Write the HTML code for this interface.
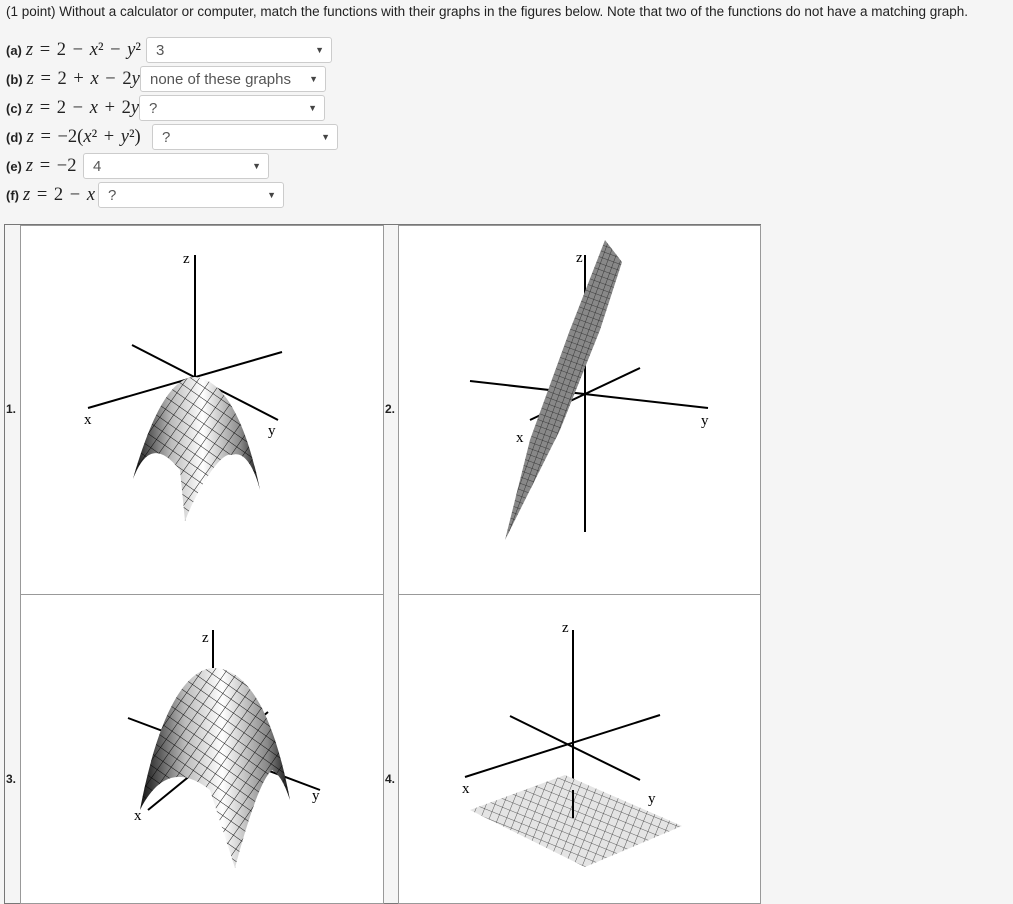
<!DOCTYPE html>
<html><head><meta charset="utf-8"><style>
body{margin:0;background:#f5f5f5;font-family:"Liberation Sans",sans-serif;font-size:14px;color:#222;width:1013px;height:895px;overflow:hidden;position:relative}
.p{position:absolute;left:6px;top:4px;font-size:13.5px}
.row{position:absolute;left:6px;height:28px;display:flex;align-items:center}
.row b{font-weight:bold;font-size:13px;margin-right:4px}
.m{font-family:"Liberation Serif",serif;font-size:18.5px;word-spacing:2px}
.m i{font-style:italic}
.sel{position:absolute;height:26px;background:#fff;border:1px solid #ccc;border-radius:3px;box-sizing:border-box;font-size:15px;color:#555;padding-left:9px;line-height:25px}
.sel:after{content:"▼";position:absolute;right:7px;top:0;font-size:9px;color:#444}
.tbl{position:absolute;left:4px;top:224px;width:757px;height:680px;border:1px solid #777;box-sizing:border-box;background:#f5f5f5}
.cell{position:absolute;background:#fff;border:1px solid #999;box-sizing:border-box}
.lab{position:absolute;font-weight:bold;font-size:12px}
svg{position:absolute;left:0;top:0}
</style></head><body>
<div class="p">(1 point) Without a calculator or computer, match the functions with their graphs in the figures below. Note that two of the functions do not have a matching graph.</div>
<div class="row" style="top:36px"><b>(a)</b><span class="m"><i>z</i> = 2 − <i>x</i>² − <i>y</i>²</span></div><div class="sel" style="left:146px;top:37px;width:186px">3</div>
<div class="row" style="top:65px"><b>(b)</b><span class="m"><i>z</i> = 2 + <i>x</i> − 2<i>y</i></span></div><div class="sel" style="left:140px;top:66px;width:186px">none of these graphs</div>
<div class="row" style="top:94px"><b>(c)</b><span class="m"><i>z</i> = 2 − <i>x</i> + 2<i>y</i></span></div><div class="sel" style="left:139px;top:95px;width:186px">?</div>
<div class="row" style="top:123px"><b>(d)</b><span class="m"><i>z</i> = −2(<i>x</i>² + <i>y</i>²)</span></div><div class="sel" style="left:152px;top:124px;width:186px">?</div>
<div class="row" style="top:152px"><b>(e)</b><span class="m"><i>z</i> = −2</span></div><div class="sel" style="left:83px;top:153px;width:186px">4</div>
<div class="row" style="top:181px"><b>(f)</b><span class="m"><i>z</i> = 2 − <i>x</i></span></div><div class="sel" style="left:98px;top:182px;width:186px">?</div>

<div class="tbl"></div>
<div class="cell" style="left:20px;top:225px;width:364px;height:370px"></div>
<div class="cell" style="left:398px;top:225px;width:363px;height:370px"></div>
<div class="cell" style="left:20px;top:594px;width:364px;height:310px"></div>
<div class="cell" style="left:398px;top:594px;width:363px;height:310px"></div>
<div class="lab" style="left:6px;top:402px">1.</div>
<div class="lab" style="left:385px;top:402px">2.</div>
<div class="lab" style="left:6px;top:772px">3.</div>
<div class="lab" style="left:385px;top:772px">4.</div>

<svg width="1013" height="895" font-family="Liberation Serif" font-size="15">
<defs>
<linearGradient id="g" x1="0" x2="1"><stop offset="0" stop-color="#111"/><stop offset=".3" stop-color="#bbb"/><stop offset=".55" stop-color="#fff"/><stop offset=".85" stop-color="#888"/><stop offset="1" stop-color="#111"/></linearGradient>
<pattern id="grid" width="10" height="10" patternUnits="userSpaceOnUse" patternTransform="rotate(35)"><path d="M0 0H10M0 0V10" stroke="#000" stroke-width="1"/></pattern>
<pattern id="grid2" width="6" height="6" patternUnits="userSpaceOnUse" patternTransform="rotate(20)"><path d="M0 0H6M0 0V6" stroke="#222" stroke-width=".8"/></pattern>
<pattern id="grid3" width="8" height="8" patternUnits="userSpaceOnUse" patternTransform="rotate(22)"><path d="M0 0H8M0 0V8" stroke="#333" stroke-width=".8"/></pattern>
</defs>
<g stroke="#000" stroke-width="2">
<line x1="195" y1="255" x2="195" y2="378"/>
<line x1="88" y1="408" x2="282" y2="352"/>
<line x1="132" y1="345" x2="278" y2="420"/>
</g>
<path d="M195 377C170 377 150 420 133 479C148 440 165 452 180 470L185 521C195 495 220 450 232 455C245 450 255 470 260 490C250 440 230 380 195 377Z" fill="url(#g)"/>
<path d="M195 377C170 377 150 420 133 479C148 440 165 452 180 470L185 521C195 495 220 450 232 455C245 450 255 470 260 490C250 440 230 380 195 377Z" fill="url(#grid)" opacity=".9"/>
<text x="183" y="263">z</text><text x="84" y="424">x</text><text x="268" y="435">y</text>
<g stroke="#000" stroke-width="2">
<line x1="585" y1="255" x2="585" y2="532"/>
<line x1="470" y1="381" x2="708" y2="408"/>
<line x1="640" y1="368" x2="530" y2="420"/>
</g>
<path d="M605 240L622 262L600 330L560 430L505 540L530 440L570 330Z" fill="#888"/>
<path d="M605 240L622 262L600 330L560 430L505 540L530 440L570 330Z" fill="url(#grid2)"/>
<text x="576" y="262">z</text><text x="516" y="442">x</text><text x="701" y="425">y</text>
<g stroke="#000" stroke-width="2">
<line x1="213" y1="630" x2="213" y2="668"/>
<line x1="128" y1="718" x2="320" y2="790"/>
<line x1="268" y1="712" x2="148" y2="810"/>
</g>
<path d="M213 668C180 670 155 730 140 810C160 770 185 770 210 790L235 868C245 830 260 780 272 770C280 775 285 785 290 800C275 720 250 668 213 668Z" fill="url(#g)"/>
<path d="M213 668C180 670 155 730 140 810C160 770 185 770 210 790L235 868C245 830 260 780 272 770C280 775 285 785 290 800C275 720 250 668 213 668Z" fill="url(#grid)" opacity=".9"/>
<text x="202" y="642">z</text><text x="134" y="820">x</text><text x="312" y="800">y</text>
<g stroke="#000" stroke-width="2">
<line x1="573" y1="630" x2="573" y2="790"/>
<line x1="510" y1="716" x2="640" y2="780"/>
<line x1="465" y1="777" x2="660" y2="715"/>
</g>
<path d="M470 810L565 775L682 826L585 867Z" fill="#e4e4e4"/>
<path d="M470 810L565 775L682 826L585 867Z" fill="url(#grid3)"/>
<line x1="573" y1="790" x2="573" y2="818" stroke="#000" stroke-width="2"/>
<text x="562" y="632">z</text><text x="462" y="793">x</text><text x="648" y="803">y</text>
</svg>
</body></html>
